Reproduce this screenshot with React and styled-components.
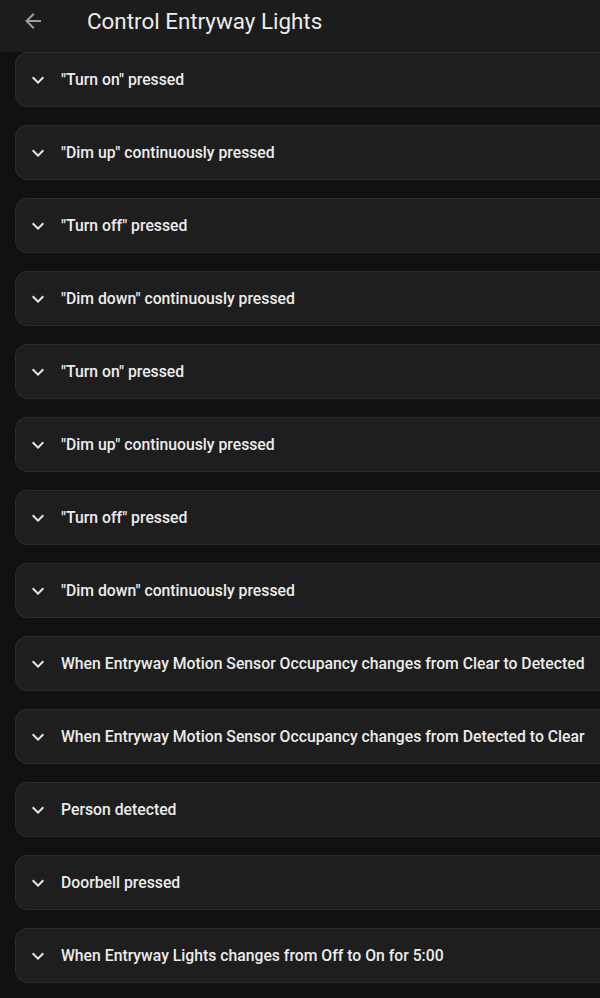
import React from 'react'
import styled, { createGlobalStyle } from 'styled-components'

const GlobalStyle = createGlobalStyle`
    html, body {
        margin: 0;
        padding: 0;
        background: #111111;
        overflow: hidden;
    }
    body {
        font-family: Roboto, "Noto Sans", sans-serif;
        color: #e1e1e1;
    }
`

const Page = styled.div`
    width: 600px;
    height: 998px;
    overflow: hidden;
    background: #111111;
`

const Toolbar = styled.header`
    height: 52px;
    display: flex;
    align-items: center;
    background: #1c1c1c;
    padding-left: 21px;
    box-sizing: border-box;
`

const BackButton = styled.button`
    width: 24px;
    height: 24px;
    padding: 0;
    border: none;
    background: none;
    color: #9e9e9e;
    display: flex;
    align-items: center;
    justify-content: center;
    margin-top: -10px;
`

const Title = styled.h1`
    margin: -10px 0 0 42px;
    font-size: 22.4px;
    font-weight: 400;
    color: #ececec;
`

const List = styled.div`
    display: flex;
    flex-direction: column;
    gap: 18px;
    padding-left: 15px;
`

const Card = styled.div`
    width: 620px;
    height: 55px;
    box-sizing: border-box;
    display: flex;
    align-items: center;
    background: #1e1e1e;
    border: 1px solid #2c2c2c;
    border-radius: 12px;
    padding-left: 10px;
`

const Chevron = styled.svg`
    width: 24px;
    height: 24px;
    fill: #e6e6e6;
    flex-shrink: 0;
`

const Label = styled.span`
    margin-left: 11px;
    font-size: 15.75px;
    font-weight: 500;
    color: #ececec;
    white-space: nowrap;
`

const triggers = [
    '"Turn on" pressed',
    '"Dim up" continuously pressed',
    '"Turn off" pressed',
    '"Dim down" continuously pressed',
    '"Turn on" pressed',
    '"Dim up" continuously pressed',
    '"Turn off" pressed',
    '"Dim down" continuously pressed',
    'When Entryway Motion Sensor Occupancy changes from Clear to Detected',
    'When Entryway Motion Sensor Occupancy changes from Detected to Clear',
    'Person detected',
    'Doorbell pressed',
    'When Entryway Lights changes from Off to On for 5:00',
]

const TriggerRow = ({ label }) => (
    <Card>
        <Chevron viewBox="0 0 24 24">
            <path d="M7.41,8.58L12,13.17L16.59,8.58L18,10L12,16L6,10L7.41,8.58Z" />
        </Chevron>
        <Label>{label}</Label>
    </Card>
)

const App = () => {
    return (
        <Page>
            <GlobalStyle />
            <Toolbar>
                <BackButton aria-label="Back">
                    <svg width="24" height="24" viewBox="0 0 24 24" fill="currentColor">
                        <path d="M20,11V13H8L13.5,18.5L12.08,19.92L4.16,12L12.08,4.08L13.5,5.5L8,11H20Z" />
                    </svg>
                </BackButton>
                <Title>Control Entryway Lights</Title>
            </Toolbar>
            <List>
                {triggers.map((t, i) => (
                    <TriggerRow key={i} label={t} />
                ))}
            </List>
        </Page>
    )
}

export default App
